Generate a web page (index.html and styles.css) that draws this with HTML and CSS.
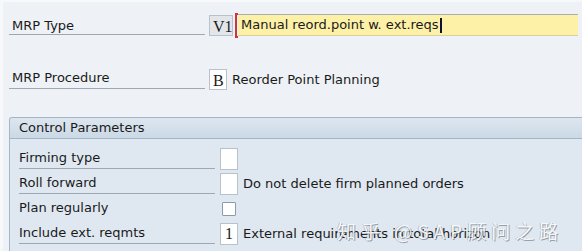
FILE: index.html
```html
<!DOCTYPE html>
<html>
<head>
<meta charset="utf-8">
<link rel="stylesheet" href="styles.css">
</head>
<body>
<div class="page">
  <div class="row row-type">
    <div class="label">MRP Type</div>
    <div class="code code-grey">V1</div>
    <div class="bracket"></div>
    <div class="yellow">Manual reord.point w. ext.reqs<span class="caret"></span></div>
  </div>
  <div class="row row-proc">
    <div class="label">MRP Procedure</div>
    <div class="code code-white">B</div>
    <div class="desc">Reorder Point Planning</div>
  </div>
  <div class="group">
    <div class="group-head">Control Parameters</div>
    <div class="group-body">
      <div class="grow">
        <div class="glabel">Firming type</div>
        <div class="box box-tall"></div>
      </div>
      <div class="grow">
        <div class="glabel">Roll forward</div>
        <div class="box box-tall"></div>
        <div class="desc">Do not delete firm planned orders</div>
      </div>
      <div class="grow">
        <div class="glabel nol">Plan regularly</div>
        <div class="check"></div>
      </div>
      <div class="grow">
        <div class="glabel">Include ext. reqmts</div>
        <div class="box box-tall val">1</div>
        <div class="desc">External requirements in total horizon</div>
      </div>
    </div>
  </div>
  <div class="watermark">知乎 @SAP顾问之路</div>
</div>
</body>
</html>
```
FILE: styles.css
```css
html, body {
  margin: 0;
  padding: 0;
}
body {
  width: 582px;
  height: 251px;
  overflow: hidden;
  background: #f7f8fa;
  font-family: Tahoma, "DejaVu Sans", "Liberation Sans", sans-serif;
  font-size: 13px;
  color: #1a1a1a;
}
.page {
  position: relative;
  margin: 2px 0 0 3px;
  height: 249px;
  background: #eef2f6;
  display: flex;
  flex-direction: column;
  padding-left: 6px;
}
.row {
  display: flex;
  align-items: center;
  height: 24px;
}
.row-type {
  margin-top: 11px;
}
.row-type .label {
  line-height: 23px;
}
.row-proc {
  margin-top: 30px;
}
.label {
  width: 193px;
  padding-left: 3px;
  height: 20px;
  line-height: 20px;
  border-bottom: 1px solid #9ea8b2;
  align-self: flex-start;
  margin-top: 1px;
  margin-right: 4px;
}
.code {
  font-family: "Liberation Serif", "DejaVu Serif", serif;
  font-size: 16px;
  height: 21px;
  line-height: 21px;
  box-sizing: border-box;
  border: 1px solid #b8c2cc;
  padding: 0 3px;
}
.code-grey {
  background: #e2e6eb;
  width: 24px;
}
.code-white {
  background: #ffffff;
  width: 18px;
  padding: 0 3px;
}
.bracket {
  width: 3px;
  height: 25px;
  border: 2px solid #d0343a;
  border-right: none;
  margin-left: 2px;
  box-sizing: border-box;
}
.yellow {
  flex: 1;
  margin-right: 4px;
  height: 22px;
  line-height: 20px;
  box-sizing: border-box;
  background: #fdf1a8;
  border-top: 1px solid #a8aeb4;
  border-bottom: 1px solid #d8d0a0;
  padding-left: 3px;
  display: flex;
  align-items: center;
}
.caret {
  display: inline-block;
  width: 2px;
  height: 15px;
  background: #101030;
  margin-left: 1px;
}
.desc {
  margin-left: 5px;
  white-space: nowrap;
}
.group {
  margin-top: 26px;
  margin-right: -10px;
  border: 1px solid #a3b6c9;
  border-right: none;
  border-bottom: none;
  border-radius: 3px 0 0 0;
  flex: 1;
  display: flex;
  flex-direction: column;
  background: #dfe8f1;
}
.group-head {
  height: 20px;
  line-height: 20px;
  padding-left: 9px;
  background: linear-gradient(#dde6ef, #cbd9e6);
  border-bottom: 1px solid #a3b6c9;
  border-radius: 3px 0 0 0;
}
.group-body {
  display: flex;
  flex-direction: column;
  padding-left: 9px;
  padding-top: 7px;
}
.grow {
  display: flex;
  align-items: center;
  height: 25px;
  position: relative;
}
.glabel {
  width: 196px;
  height: 20px;
  line-height: 20px;
  border-bottom: 1px solid #9ea8b2;
  margin-right: 5px;
}
.glabel.nol {
  border-bottom-color: transparent;
}
.box {
  width: 18px;
  box-sizing: border-box;
  background: #ffffff;
  border: 1px solid #b8c2cc;
}
.box-tall {
  height: 22px;
}
.val {
  font-family: "Liberation Serif", "DejaVu Serif", serif;
  font-size: 16px;
  line-height: 20px;
  text-align: center;
}
.check {
  width: 14px;
  height: 14px;
  margin-left: 2px;
  margin-right: 2px;
  box-sizing: border-box;
  background: #ffffff;
  border: 1px solid #8e9aa6;
  border-radius: 1px;
}
.watermark {
  position: absolute;
  left: 334px;
  top: 215px;
  font-family: "Noto Sans CJK SC", sans-serif;
  font-size: 19px;
  letter-spacing: 5px;
  color: rgba(255, 255, 255, 0.9);
  text-shadow: 1px 1px 0 rgba(90, 100, 110, 0.55), -1px 0 0 rgba(90, 100, 110, 0.3);
}
```
